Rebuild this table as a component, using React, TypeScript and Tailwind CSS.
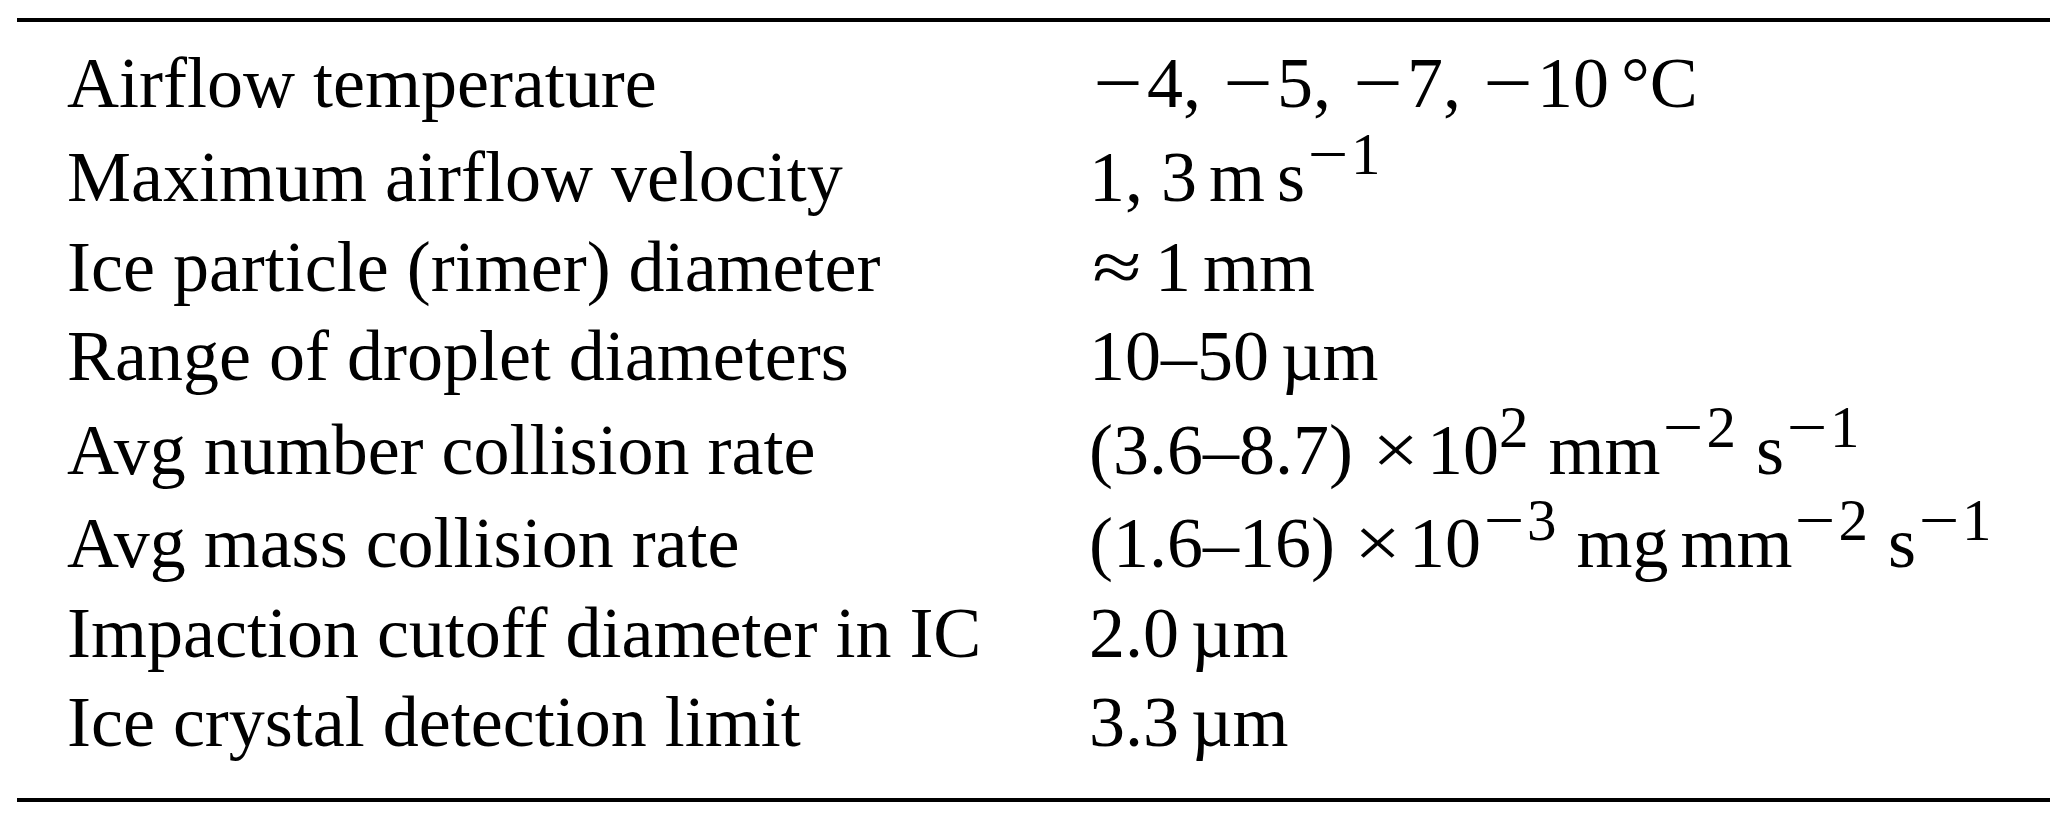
import React from "react";

const M = () => (
  <span className="inline-block w-[58px] text-center scale-x-[1.22]">−</span>
);
const MS = () => (
  <span className="inline-block w-[46px] text-center scale-x-[1.22]">−</span>
);
const X = () => (
  <span className="inline-block w-[56px] pr-[6px] text-center scale-x-[1.15]">×</span>
);
const Approx = () => (
  <span className="inline-block w-[56px] text-center scale-x-[1.25]">≈</span>
);
const T = () => <span className="inline-block w-[12px]" />;
const TS = () => <span className="inline-block w-[20px]" />;
const Sup = ({ children }: { children: React.ReactNode }) => (
  <span className="text-[59px] leading-[0] align-[27px]">{children}</span>
);

type Row = { label: string; value: React.ReactNode; pad: string };

const rows: Row[] = [
  {
    label: "Airflow temperature",
    pad: "pt-0",
    value: (
      <>
        <M />4,{" "}<M />5,{" "}<M />7,{" "}<M />10<T />°C
      </>
    ),
  },
  {
    label: "Maximum airflow velocity",
    pad: "pt-[5px]",
    value: (
      <>
        1, 3<T />m<T />s<Sup><MS />1</Sup>
      </>
    ),
  },
  {
    label: "Ice particle (rimer) diameter",
    pad: "pt-[1px]",
    value: (
      <>
        <Approx /><span className="inline-block w-[10px]" />1<T />mm
      </>
    ),
  },
  {
    label: "Range of droplet diameters",
    pad: "pt-0",
    value: (
      <>
        10–50<T />µm
      </>
    ),
  },
  {
    label: "Avg number collision rate",
    pad: "pt-[5px]",
    value: (
      <>
        (3.6–8.7) <X />10<Sup>2</Sup><TS />mm<Sup><MS />2</Sup><TS />s<Sup><MS />1</Sup>
      </>
    ),
  },
  {
    label: "Avg mass collision rate",
    pad: "pt-[4px]",
    value: (
      <>
        (1.6–16) <X />10<Sup><MS />3</Sup><TS />mg<T />mm<Sup><MS />2</Sup><TS />s<Sup><MS />1</Sup>
      </>
    ),
  },
  {
    label: "Impaction cutoff diameter in IC",
    pad: "pt-[1px]",
    value: (
      <>
        2.0<T />µm
      </>
    ),
  },
  {
    label: "Ice crystal detection limit",
    pad: "pt-0",
    value: (
      <>
        3.3<T />µm
      </>
    ),
  },
];

export default function App() {
  return (
    <div className="w-[2067px] h-[820px] bg-white text-black font-['Liberation_Serif','Times_New_Roman',serif] text-[72px] px-[17px] pt-[18px] overflow-hidden">
      <div className="h-[4px] bg-black" />
      <div className="pt-[17px]">
        {rows.map((r) => (
          <div
            key={r.label}
            className={`grid grid-cols-[1022px_1fr] pl-[50px] leading-[89px] whitespace-nowrap ${r.pad}`}
          >
            <div>{r.label}</div>
            <div>{r.value}</div>
          </div>
        ))}
      </div>
      <div className="mt-[31px] h-[4px] bg-black" />
    </div>
  );
}
